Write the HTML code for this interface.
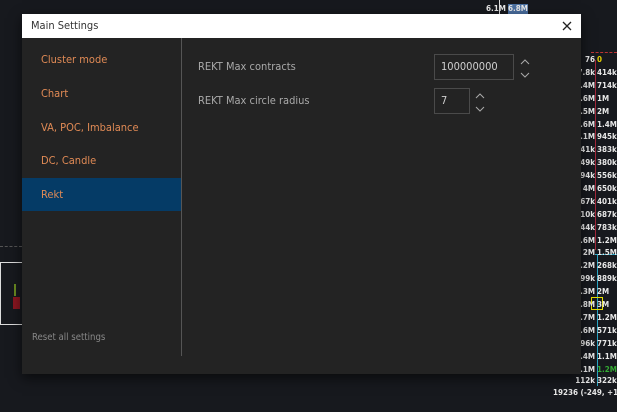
<!DOCTYPE html><html><head><style>
body{margin:0;width:617px;height:412px;background:#17191e;position:relative;overflow:hidden;font-family:"DejaVu Sans Condensed","Liberation Sans",sans-serif;}
.abs{position:absolute}
.num{position:absolute;font-size:8px;color:#e8e8e8;font-weight:bold;line-height:10px;white-space:nowrap}
.l{right:22px;text-align:right}
.r{left:597px}
.dlg{left:22px;top:14px;width:559px;height:360px;background:#232323;box-shadow:0 4px 12px rgba(0,0,0,.6)}
.hdr{left:0;top:0;width:559px;height:24px;background:#fff;color:#333;font-size:11px;line-height:24px;padding-left:9px;box-sizing:border-box}
.side{color:#e08a55;font-size:11px;left:19px}
.lbl{color:#a9a9a9;font-size:11px}
.inp{border:1px solid #4a4a4a;color:#cfcfcf;font-size:11px;line-height:24px;padding-left:6px;box-sizing:border-box;height:26px}
</style></head><body>
<div class="abs" style="left:0;top:246px;width:22px;border-top:1px dashed #555"></div>
<div class="abs" style="left:0;top:262px;width:21px;height:61px;border:1px solid #ddd;border-right:none"></div>
<div class="abs" style="left:14px;top:284px;width:2px;height:12px;background:#6a8a20"></div>
<div class="abs" style="left:13px;top:297px;width:7px;height:12px;background:#8a1620"></div>
<div class="abs" style="left:591px;top:52px;width:26px;border-top:1px dashed #b33"></div>
<div class="abs" style="left:595px;top:254px;width:22px;border-top:1px solid #29a5c4"></div>
<div class="abs" style="left:597px;top:254px;height:132px;border-left:1px solid #29a5c4"></div>
<div class="abs" style="left:595px;top:60px;height:190px;border-left:1px solid #a1283a"></div>
<div class="abs" style="left:591px;top:297px;width:10px;height:11px;border:1px solid #e5e000"></div>
<div class="num" style="left:486px;top:4px">6.1M</div><div class="num" style="left:508px;top:4px;background:#4a6fa0">6.8M</div>
<div class="num" style="left:499px;top:0;width:1px;height:14px;background:#ddd"></div>
<div class="num l" style="top:55px">76</div><div class="num r" style="top:55px;color:#e5d000">0</div>
<div class="num l" style="top:68px">7.8k</div><div class="num r" style="top:68px">414k</div>
<div class="num l" style="top:81px">.4M</div><div class="num r" style="top:81px">714k</div>
<div class="num l" style="top:94px">.6M</div><div class="num r" style="top:94px">1M</div>
<div class="num l" style="top:107px">.5M</div><div class="num r" style="top:107px">2M</div>
<div class="num l" style="top:120px">.6M</div><div class="num r" style="top:120px">1.4M</div>
<div class="num l" style="top:132px">.1M</div><div class="num r" style="top:132px">945k</div>
<div class="num l" style="top:145px">41k</div><div class="num r" style="top:145px">383k</div>
<div class="num l" style="top:158px">49k</div><div class="num r" style="top:158px">380k</div>
<div class="num l" style="top:171px">94k</div><div class="num r" style="top:171px">556k</div>
<div class="num l" style="top:184px">4M</div><div class="num r" style="top:184px">650k</div>
<div class="num l" style="top:197px">67k</div><div class="num r" style="top:197px">401k</div>
<div class="num l" style="top:210px">10k</div><div class="num r" style="top:210px">687k</div>
<div class="num l" style="top:223px">44k</div><div class="num r" style="top:223px">783k</div>
<div class="num l" style="top:236px">.6M</div><div class="num r" style="top:236px">1.2M</div>
<div class="num l" style="top:248px">2M</div><div class="num r" style="top:248px">1.5M</div>
<div class="num l" style="top:261px">.2M</div><div class="num r" style="top:261px">268k</div>
<div class="num l" style="top:274px">99k</div><div class="num r" style="top:274px">889k</div>
<div class="num l" style="top:287px">.3M</div><div class="num r" style="top:287px">2M</div>
<div class="num l" style="top:300px">.8M</div><div class="num r" style="top:300px">3M</div>
<div class="num l" style="top:313px">.7M</div><div class="num r" style="top:313px">1.2M</div>
<div class="num l" style="top:326px">.6M</div><div class="num r" style="top:326px">571k</div>
<div class="num l" style="top:339px">96k</div><div class="num r" style="top:339px">771k</div>
<div class="num l" style="top:352px">.4M</div><div class="num r" style="top:352px">1.1M</div>
<div class="num l" style="top:365px">.1M</div><div class="num r" style="top:365px;color:#3a3">1.2M</div>
<div class="num l" style="top:376px">112k</div><div class="num r" style="top:376px">322k</div>
<div class="num" style="left:553px;top:388px">19236 (-249, +10</div>
<div class="abs dlg">
<div class="abs hdr">Main Settings</div>
<svg class="abs" style="left:540px;top:7px" width="10" height="10"><path d="M1 1L9 9M9 1L1 9" stroke="#222" stroke-width="1.3"/></svg>
<div class="abs" style="left:159px;top:24px;width:1px;height:318px;background:#555"></div>
<div class="abs" style="left:0;top:164px;width:159px;height:33px;background:#053b66"></div>
<div class="abs side" style="top:39px">Cluster mode</div>
<div class="abs side" style="top:73px">Chart</div>
<div class="abs side" style="top:107px">VA, POC, Imbalance</div>
<div class="abs side" style="top:140px">DC, Candle</div>
<div class="abs side" style="top:174px">Rekt</div>
<div class="abs" style="left:10px;top:318px;color:#888;font-size:9.5px">Reset all settings</div>
<div class="abs lbl" style="left:176px;top:46px">REKT Max contracts</div>
<div class="abs lbl" style="left:176px;top:80px">REKT Max circle radius</div>
<div class="abs inp" style="left:412px;top:40px;width:80px">100000000</div>
<div class="abs inp" style="left:412px;top:74px;width:36px">7</div>
<svg class="abs" style="left:498px;top:45px" width="10" height="20"><path d="M1 5L5 1L9 5M1 14L5 18L9 14" stroke="#aaa" fill="none"/></svg>
<svg class="abs" style="left:453px;top:79px" width="10" height="20"><path d="M1 5L5 1L9 5M1 14L5 18L9 14" stroke="#aaa" fill="none"/></svg>
</div>
</body></html>
